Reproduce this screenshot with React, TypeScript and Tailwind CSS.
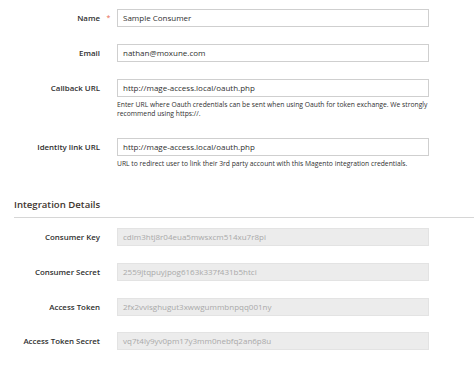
import React from "react";

const font = { fontFamily: '"Open Sans", "Noto Sans", sans-serif' };

function Row({
  label,
  value,
  required,
  help,
  disabled,
  className,
}: {
  label: string;
  value: string;
  required?: boolean;
  help?: React.ReactNode;
  disabled?: boolean;
  className?: string;
}) {
  return (
    <div className={"flex items-start " + (className ?? "")}>
      <div className="w-[100px] shrink-0 text-right text-[7.9px] font-semibold leading-[18px] text-[#303030]">
        {label}
      </div>
      <div className="w-[17px] shrink-0 text-center text-[7px] leading-[18px] text-[#e8674f]">
        {required ? "*" : ""}
      </div>
      <div className="w-[312px] shrink-0">
        {disabled ? (
          <div className="h-[18px] border border-[#e3e3e3] bg-[#ececec] px-[5px] text-[8px] leading-[16px] text-[#a9a9a9]">
            {value}
          </div>
        ) : (
          <div className="h-[18px] border border-[#cfcfcf] bg-white px-[5px] text-[8px] leading-[16px] text-[#303030]">
            {value}
          </div>
        )}
        {help ? (
          <div className="mt-[3px] text-[6.75px] leading-[9px] text-[#303030]">{help}</div>
        ) : null}
      </div>
    </div>
  );
}

export default function App() {
  return (
    <div className="h-[369px] w-[474px] overflow-hidden bg-white pt-[9px]" style={font}>
      <Row label="Name" value="Sample Consumer" required />
      <Row label="Email" value="nathan@moxune.com" className="mt-[17px]" />
      <Row
        label="Callback URL"
        value="http://mage-access.local/oauth.php"
        className="mt-[17px]"
        help={
          <>
            Enter URL where Oauth credentials can be sent when using Oauth for token exchange. We strongly
            <br />
            recommend using https://.
          </>
        }
      />
      <Row
        label="Identity link URL"
        value="http://mage-access.local/oauth.php"
        className="mt-[20px]"
        help="URL to redirect user to link their 3rd party account with this Magento integration credentials."
      />
      <div className="ml-[14px] mt-[30px] border-b border-[#d6d6d6] pb-[5px]">
        <div className="text-[9.6px] font-semibold leading-[14px] text-[#41362f]">Integration Details</div>
      </div>
      <Row label="Consumer Key" value="cdlm3htj8r04eua5mwsxcm514xu7r8pi" disabled className="mt-[10px]" />
      <Row label="Consumer Secret" value="2559jtqpuyjpog6163k337f431b5htci" disabled className="mt-[17px]" />
      <Row label="Access Token" value="2fx2vvisghugut3xwwgummbnpqq001ny" disabled className="mt-[17px]" />
      <Row label="Access Token Secret" value="vq7t4ly9yv0pm17y3mm0nebfq2an6p8u" disabled className="mt-[16px]" />
    </div>
  );
}
